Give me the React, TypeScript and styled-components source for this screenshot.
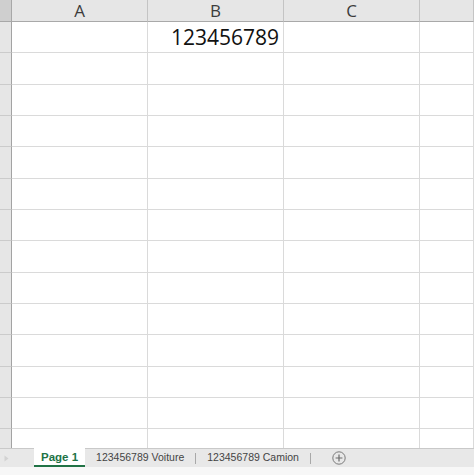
import styled, { createGlobalStyle } from "styled-components";

const GlobalStyle = createGlobalStyle`
  html, body {
    margin: 0;
    padding: 0;
    background: #ffffff;
    overflow: hidden;
  }
  body {
    font-family: "Open Sans", "Liberation Sans", sans-serif;
  }
`;

const columns = ["A", "B", "C", ""];
const rowCount = 14;

const App = () => {
  const rows = Array.from({ length: rowCount }, (_, i) => i);

  return (
    <>
      <GlobalStyle />
      <Sheet>
        <Grid>
          <Corner />
          {columns.map((c, i) => (
            <ColHeader key={"h" + i}>{c}</ColHeader>
          ))}
          {rows.map((r) => (
            <Row key={r}>
              <RowHeader />
              {columns.map((_, ci) => (
                <Cell key={ci} $align={ci === 1 ? "right" : "left"}>
                  {r === 0 && ci === 1 ? "123456789" : ""}
                </Cell>
              ))}
            </Row>
          ))}
        </Grid>
        <TabBar>
          <ScrollArrow>
            <svg width="5" height="7" viewBox="0 0 5 7">
              <path d="M0.5 0.5 L4.5 3.5 L0.5 6.5 Z" fill="#d2d2d2" />
            </svg>
          </ScrollArrow>
          <Tab $active>Page 1</Tab>
          <Tab>123456789 Voiture</Tab>
          <Divider />
          <Tab>123456789 Camion</Tab>
          <Divider />
          <AddButton>
            <svg width="14" height="14" viewBox="0 0 14 14">
              <circle cx="7" cy="7" r="6.2" fill="none" stroke="#7a7a7a" strokeWidth="1" />
              <path d="M7 3.6 V10.4 M3.6 7 H10.4" stroke="#6a6a6a" strokeWidth="1.2" />
            </svg>
          </AddButton>
        </TabBar>
        <Footer />
      </Sheet>
    </>
  );
};

export default App;

const Sheet = styled.div`
  width: 100vw;
  height: 100vh;
  display: flex;
  flex-direction: column;
  overflow: hidden;
`;

const Grid = styled.div`
  height: 448px;
  flex: none;
  display: grid;
  grid-template-columns: 12px 136px 136px 136px 1fr;
  grid-template-rows: 22px;
  grid-auto-rows: 31.33px;
  overflow: hidden;
`;

const Row = styled.div`
  display: contents;
`;

const Corner = styled.div`
  box-sizing: border-box;
  background: #cfcfcf;
  border-right: 1px solid #a8a8a8;
  border-bottom: 1px solid #a8a8a8;
`;

const ColHeader = styled.div`
  box-sizing: border-box;
  background: #e6e6e6;
  border-right: 1px solid #c4c4c4;
  border-bottom: 1px solid #a9a9a9;
  color: #3c3c3c;
  font-family: "Open Sans", sans-serif;
  font-size: 17px;
  line-height: 21px;
  text-align: center;
`;

const RowHeader = styled.div`
  box-sizing: border-box;
  background: #e6e6e6;
  border-right: 1px solid #a3a3a3;
  border-bottom: 1px solid #cbcbcb;
`;

const Cell = styled.div<{ $align: "left" | "right" }>`
  box-sizing: border-box;
  border-right: 1px solid #dadada;
  border-bottom: 1px solid #dadada;
  font-family: "Open Sans", sans-serif;
  font-size: 21px;
  color: #111111;
  text-align: ${(p) => p.$align};
  padding: 0 4px 0 4px;
  display: flex;
  align-items: center;
  justify-content: ${(p) => (p.$align === "right" ? "flex-end" : "flex-start")};
  white-space: nowrap;
  overflow: hidden;
`;

const TabBar = styled.div`
  height: 19px;
  flex: none;
  box-sizing: border-box;
  background: #e8e8e8;
  border-top: 1px solid #c9c9c9;
  display: flex;
  align-items: stretch;
  font-family: "Liberation Sans", sans-serif;
  font-size: 10.5px;
`;

const ScrollArrow = styled.div`
  width: 34px;
  display: flex;
  align-items: center;
  padding-left: 4px;
  box-sizing: border-box;
`;

const Tab = styled.div<{ $active?: boolean }>`
  display: flex;
  align-items: center;
  padding: 0 ${(p) => (p.$active ? "7px" : "11px")};
  color: ${(p) => (p.$active ? "#217346" : "#444444")};
  font-weight: ${(p) => (p.$active ? 700 : 400)};
  font-size: ${(p) => (p.$active ? "11.5px" : "10.5px")};
  background: ${(p) => (p.$active ? "#ffffff" : "transparent")};
  border-bottom: 2px solid ${(p) => (p.$active ? "#217346" : "transparent")};
  margin-top: -1px;
  white-space: nowrap;
`;

const Divider = styled.div`
  width: 1px;
  background: #a8a8a8;
  margin: 4px 0 3px;
`;

const AddButton = styled.div`
  display: flex;
  align-items: center;
  padding-left: 21px;
`;

const Footer = styled.div`
  flex: 1;
  background: #f7f7f7;
`;
